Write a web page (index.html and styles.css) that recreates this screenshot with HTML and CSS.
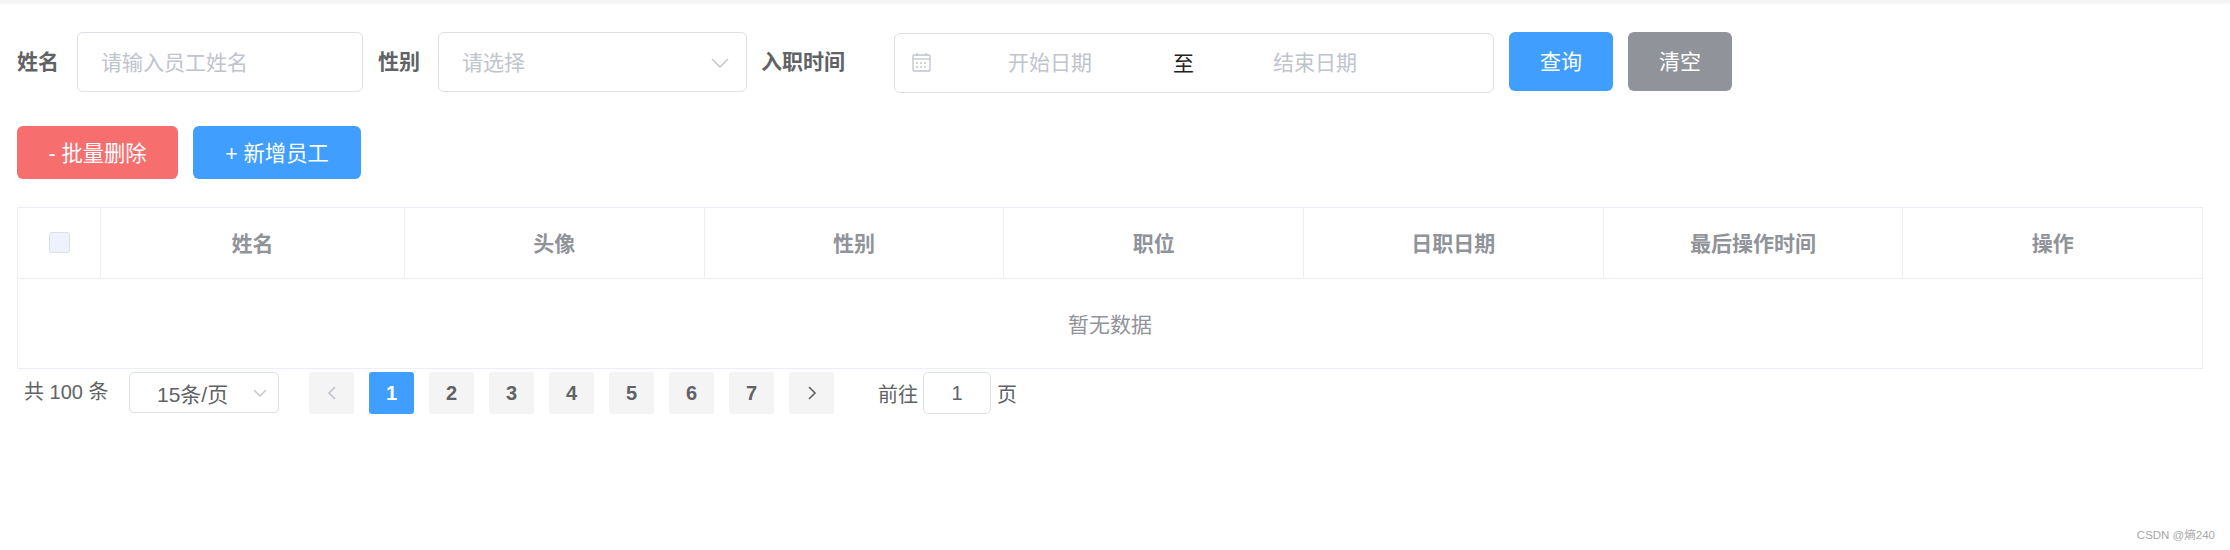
FILE: index.html
```html
<!DOCTYPE html>
<html lang="zh-CN">
<head>
    <meta charset="UTF-8">
    <meta name="viewport" content="width=device-width, initial-scale=1.0">
    <title>员工管理</title>
    <link rel="stylesheet" href="styles.css">
</head>
<body>
    <div class="topbar"></div>
    <div class="page">
        <form class="search">
            <label class="label label-name">姓名</label>
            <input class="field field-name" type="text" placeholder="请输入员工姓名">
            <label class="label label-gender">性别</label>
            <div class="field select-gender">
                <input class="inner" type="text" placeholder="请选择" readonly>
                <svg class="arrow" width="18" height="10" viewBox="0 0 18 10"><polyline points="1,1 9,9 17,1"/></svg>
            </div>
            <label class="label label-date">入职时间</label>
            <div class="field date-range">
                <svg class="calendar" width="19" height="20" viewBox="0 0 19 20">
                    <rect x="1" y="3" width="17" height="16" rx="1"/>
                    <line x1="1" y1="7" x2="18" y2="7"/>
                    <line x1="5" y1="1" x2="5" y2="4"/>
                    <line x1="14" y1="1" x2="14" y2="4"/>
                    <line class="dots" x1="4" y1="11" x2="16" y2="11"/>
                    <line class="dots" x1="4" y1="15" x2="16" y2="15"/>
                </svg>
                <input class="inner date-start" type="text" placeholder="开始日期">
                <span class="date-sep">至</span>
                <input class="inner date-end" type="text" placeholder="结束日期">
            </div>
            <button class="btn btn-primary btn-query" type="button">查询</button>
            <button class="btn btn-gray btn-clear" type="button">清空</button>
        </form>

        <div class="actions">
            <button class="btn btn-danger btn-remove" type="button">- 批量删除</button>
            <button class="btn btn-primary btn-add" type="button">+ 新增员工</button>
        </div>

        <table class="table">
            <thead>
                <tr>
                    <th class="col-check"><span class="checkbox"></span></th>
                    <th class="col-name">姓名</th>
                    <th>头像</th>
                    <th>性别</th>
                    <th>职位</th>
                    <th>日职日期</th>
                    <th>最后操作时间</th>
                    <th>操作</th>
                </tr>
            </thead>
            <tbody>
                <tr><td class="empty" colspan="8">暂无数据</td></tr>
            </tbody>
        </table>

        <div class="pager">
            <span class="total">共 100 条</span>
            <div class="size">
                <span class="size-text">15条/页</span>
                <svg class="arrow" width="14" height="8" viewBox="0 0 14 8"><polyline points="1,1 7,7 13,1"/></svg>
            </div>
            <div class="pages">
                <span class="page-btn"><svg class="chev chev-off" width="10" height="14" viewBox="0 0 10 14"><polyline points="8,1 2,7 8,13"/></svg></span>
                <span class="page-btn active">1</span>
                <span class="page-btn">2</span>
                <span class="page-btn">3</span>
                <span class="page-btn">4</span>
                <span class="page-btn">5</span>
                <span class="page-btn">6</span>
                <span class="page-btn">7</span>
                <span class="page-btn"><svg class="chev" width="10" height="14" viewBox="0 0 10 14"><polyline points="2,1 8,7 2,13"/></svg></span>
            </div>
            <div class="jump">
                <span>前往</span>
                <input class="jump-input" type="text" value="1">
                <span class="jump-unit">页</span>
            </div>
        </div>
    </div>
    <div class="mark">CSDN @熵240</div>
</body>
</html>
```

FILE: styles.css
```css
* { box-sizing: border-box; }
html, body { height: 100%; }
body { margin: 0; background: #fff; color: #606266; font-family: "Liberation Sans", "Noto Sans CJK SC", sans-serif; font-size: 21px; display: flex; flex-direction: column; overflow: hidden; }
input, button { font-family: inherit; font-size: 21px; }
input::placeholder { color: #c0c4cc; opacity: 1; }

.topbar { height: 3px; background: #f5f5f6; box-shadow: 0 1px 3px rgba(0, 0, 0, .04); }
.page { padding: 29px 27px 0 17px; flex: 1; }

/* search row */
.search { display: flex; align-items: flex-start; height: 61px; }
.label { font-weight: bold; line-height: 59px; white-space: nowrap; }
.label-name { width: 60px; }
.label-gender { width: 60px; margin-left: 15px; }
.label-date { width: 133px; margin-left: 14px; }
.field { height: 60px; border: 1px solid #dcdfe6; border-radius: 6px; background: #fff; color: #606266; outline: none; }
.field-name { width: 286px; padding: 2px 23px 0; }
.select-gender { width: 309px; display: flex; align-items: center; padding: 2px 17px 0 23px; }
.date-range { width: 600px; height: 60px; margin-top: 1px; display: flex; align-items: center; padding-left: 17px; }
.inner { border: 0; outline: none; padding: 0; background: transparent; min-width: 0; color: #606266; }
.select-gender .inner { flex: 1; }
.date-start { width: 238px; text-align: center; }
.date-end { width: 234px; text-align: center; }
.date-sep { width: 29px; padding-bottom: 3px; text-align: center; color: #222; }
.arrow { fill: none; stroke: #c0c4cc; stroke-width: 1.4; flex: none; }
.calendar { margin-top: -3px; fill: none; stroke: #c0c4cc; stroke-width: 1.3; flex: none; }
.calendar .dots { stroke-dasharray: 2 2; }

.btn { height: 59px; border: 0; border-radius: 6px; color: #fff; padding: 0 0 3px; cursor: pointer; }
.btn-primary { background: #409eff; }
.btn-gray { background: #909399; }
.btn-danger { background: #f76e6e; }
.btn-query { width: 104px; margin-left: 15px; }
.btn-clear { width: 104px; margin-left: 15px; }

/* toolbar */
.actions { display: flex; gap: 15px; margin-top: 33px; }
.actions .btn { height: 53px; font-size: 21.3px; }
.btn-remove { width: 161px; }
.btn-add { width: 168px; }

/* table */
.table { width: 2186px; table-layout: fixed; border-collapse: collapse; margin-top: 28px; }
.table th, .table td { border: 1px solid #ebeef5; padding: 0 0 2px; text-align: center; }
.table th { height: 71px; color: #909399; font-weight: bold; }
.col-check { width: 83px; }
.col-name { width: 304px; }
.checkbox { display: block; width: 21px; height: 21px; margin: 0 auto; background: #edf2fc; border: 1px solid #dcdfe6; border-radius: 3px; }
.empty { height: 90px; color: #909399; }

/* pagination */
.pager { display: flex; align-items: flex-start; margin-top: 3px; font-size: 20px; }
.total { margin-left: 7px; width: 105px; line-height: 41px; white-space: nowrap; }
.size { width: 150px; height: 41px; border: 1px solid #dcdfe6; border-radius: 5px; display: flex; align-items: center; padding: 0 11px 0 27px; }
.size-text { flex: 1; font-size: 21px; white-space: nowrap; }
.pages { display: flex; gap: 15px; margin-left: 30px; }
.page-btn { width: 45px; height: 42px; background: #f4f4f5; border-radius: 3px; display: flex; align-items: center; justify-content: center; font-weight: bold; }
.page-btn.active { background: #409eff; color: #fff; }
.chev { fill: none; stroke: #606266; stroke-width: 1.6; }
.chev-off { stroke: #c0c4cc; }
.jump { display: flex; align-items: center; gap: 5px; margin-left: 44px; height: 42px; }
.jump-input { width: 68px; height: 42px; border: 1px solid #dcdfe6; border-radius: 5px; text-align: center; font-size: 20px; color: #606266; outline: none; padding: 0; }
.jump-unit { margin-left: 1px; }

.mark { position: absolute; right: 15px; bottom: 9px; font-size: 11.5px; line-height: 12px; color: #a8a8a8; }
```
